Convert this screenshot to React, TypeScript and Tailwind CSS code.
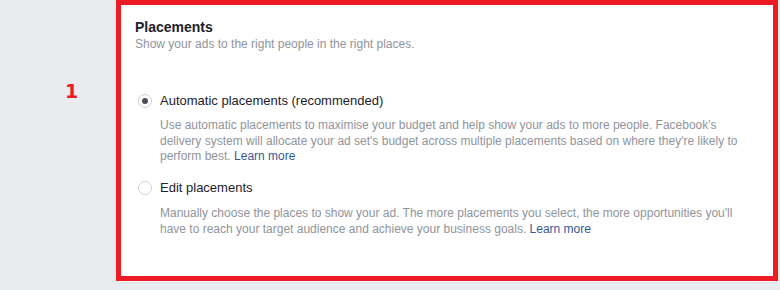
import React from "react";

function Radio({ checked }: { checked?: boolean }) {
  return (
    <span className="flex h-[14px] w-[14px] shrink-0 items-center justify-center rounded-full border border-[#ccd0d5] bg-white">
      {checked && <span className="h-[6px] w-[6px] rounded-full bg-[#4b4f56]" />}
    </span>
  );
}

export default function App() {
  return (
    <div
      className="relative flex h-[290px] w-[780px] overflow-hidden bg-[#e9ebee]"
      style={{ fontFamily: '"Liberation Sans", Arial, sans-serif' }}
    >
      <div className="w-[117px] shrink-0 pl-[65px] pt-[80px]">
        <span
          className="text-[19px] font-bold leading-[22px] text-[#ed1c24]"
          style={{ fontFamily: '"DejaVu Sans", sans-serif' }}
        >
          1
        </span>
      </div>
      <div className="flex h-[283px] w-[661px] shrink-0 flex-col rounded-b-[3px] border border-t-0 border-[#dddfe2] bg-white pl-[17px] pt-[18px]">
        <div className="text-[14px] font-bold leading-[18px] text-[#1d2129]">Placements</div>
        <div className="text-[12px] leading-[16px] text-[#90949c]">
          Show your ads to the right people in the right places.
        </div>
        <div className="mt-[41px] flex items-center gap-[8px] pl-[3px]">
          <Radio checked />
          <span className="text-[13px] leading-[16px] text-[#1d2129]">
            Automatic placements (recommended)
          </span>
        </div>
        <div className="mt-[9px] w-[615px] pl-[25px] text-[12px] leading-[15.5px] text-[#90949c]">
          Use automatic placements to maximise your budget and help show your ads to more people. Facebook's
          delivery system will allocate your ad set's budget across multiple placements based on where they're
          likely to perform best. <span className="text-[#365899]">Learn more</span>
        </div>
        <div className="mt-[15px] flex items-center gap-[8px] pl-[3px]">
          <Radio />
          <span className="text-[13px] leading-[16px] text-[#1d2129]">Edit placements</span>
        </div>
        <div className="mt-[9px] w-[615px] pl-[25px] text-[12px] leading-[16px] text-[#90949c]">
          Manually choose the places to show your ad. The more placements you select, the more opportunities
          you'll have to reach your target audience and achieve your business goals.{" "}
          <span className="text-[#365899]">Learn more</span>
        </div>
      </div>
      <div className="pointer-events-none absolute left-[116px] top-0 h-[281px] w-[662px] border-[5px] border-[#ed1c24]" />
    </div>
  );
}
